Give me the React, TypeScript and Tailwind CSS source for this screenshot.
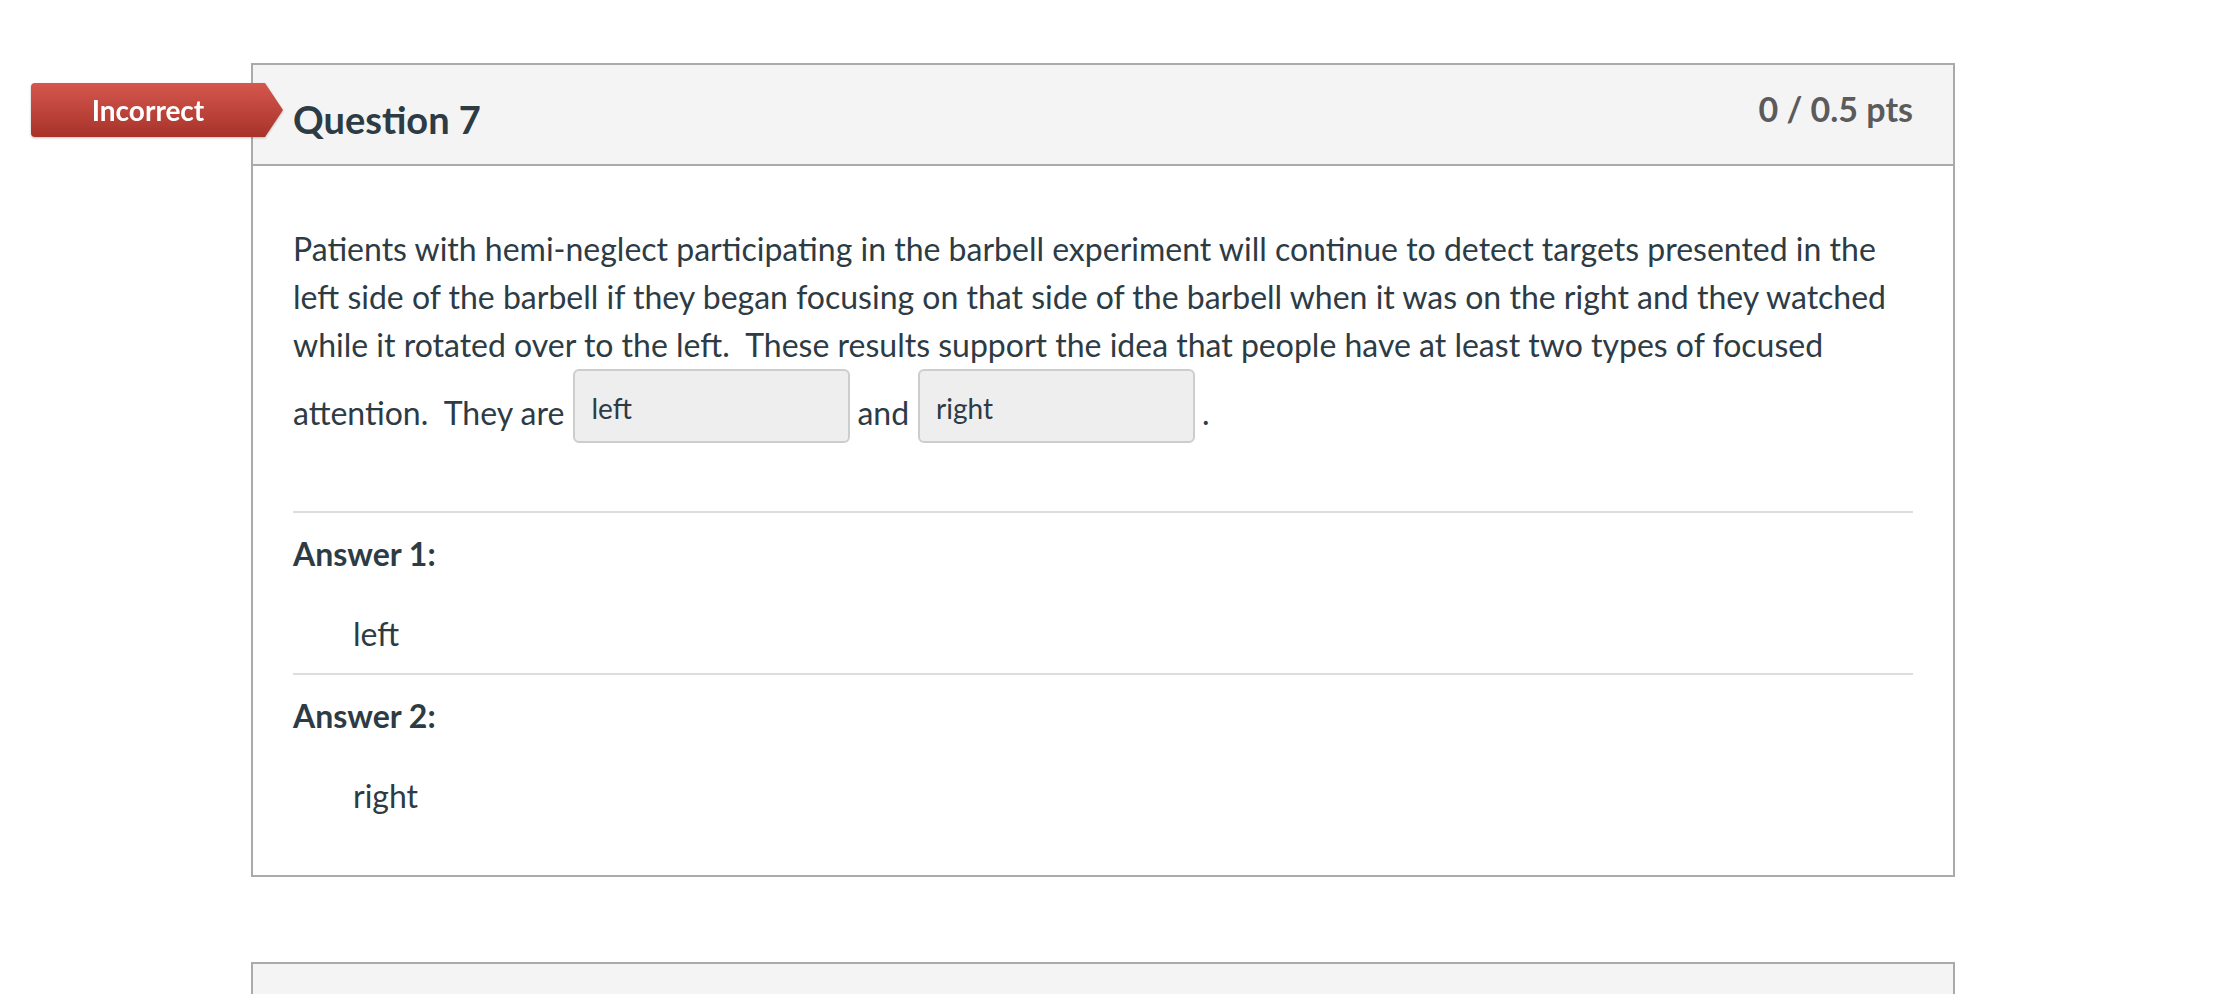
import React from 'react';

const Blank = ({ value }: { value: string }) => (
  <span className="inline-block w-[277px] h-[74px] align-[6px] ml-[9px] mr-[7px] px-[16px] pt-[17px] bg-[#eeeeee] border-2 border-[#cdcdcd] rounded-[6px] text-[28px] leading-[40px] text-[#2d3b45]">
    {value}
  </span>
);

const AnswerRow = ({ label, value }: { label: string; value: string }) => (
  <div className="border-t-2 border-[#dddddd] pt-[17px] pb-[15px]">
    <div className="text-[32px] leading-[48px] font-bold">{label}</div>
    <div className="mt-[32px] pl-[60px] text-[32px] leading-[48px]">{value}</div>
  </div>
);

export default function App() {
  return (
    <div
      className="min-h-screen bg-white text-[#2d3b45] overflow-hidden"
      style={{ fontFamily: 'Lato, "Noto Sans", sans-serif' }}
    >
      <div className="relative ml-[251px] mt-[63px] w-[1704px]">
        {/* incorrect badge */}
        <div className="absolute left-[-220px] top-[20px] drop-shadow-[0_1px_1px_rgba(0,0,0,0.25)]">
          <div className="w-[252px] h-[54px] rounded-l-[4px] bg-gradient-to-b from-[#d5574e] to-[#a7322a] [clip-path:polygon(0_0,234px_0,100%_50%,234px_100%,0_100%)] flex items-center">
            <span className="w-[234px] text-center text-white text-[28px] font-bold leading-none">Incorrect</span>
          </div>
        </div>

        <div className="border-2 border-[#aaaaaa]">
          <div className="h-[101px] bg-[#f4f4f4] border-b-2 border-[#aaaaaa] flex justify-between items-start px-[40px]">
            <div className="pt-[35px] text-[38px] leading-none font-bold">Question 7</div>
            <div className="pt-[27px] text-[34px] leading-none font-bold text-[#5b5b5b]">0 / 0.5 pts</div>
          </div>

          <div className="px-[40px] pt-[59px] pb-[40px]">
            <p className="text-[32px] leading-[48px]">
              Patients with hemi-neglect participating in the barbell experiment will continue to detect targets presented in the left side of the barbell if they began focusing on that side of the barbell when it was on the right and they watched while it rotated over to the left.{'\u00a0 '}These results support the idea that people have at least two types of focused attention.{'\u00a0 '}They are
              <Blank value="left" />
              and
              <Blank value="right" />
              .
            </p>

            <div className="mt-[68px]">
              <AnswerRow label="Answer 1:" value="left" />
              <AnswerRow label="Answer 2:" value="right" />
            </div>
          </div>
        </div>

        <div className="mt-[85px] h-[60px] border-2 border-[#aaaaaa] bg-[#f4f4f4]" />
      </div>
    </div>
  );
}
